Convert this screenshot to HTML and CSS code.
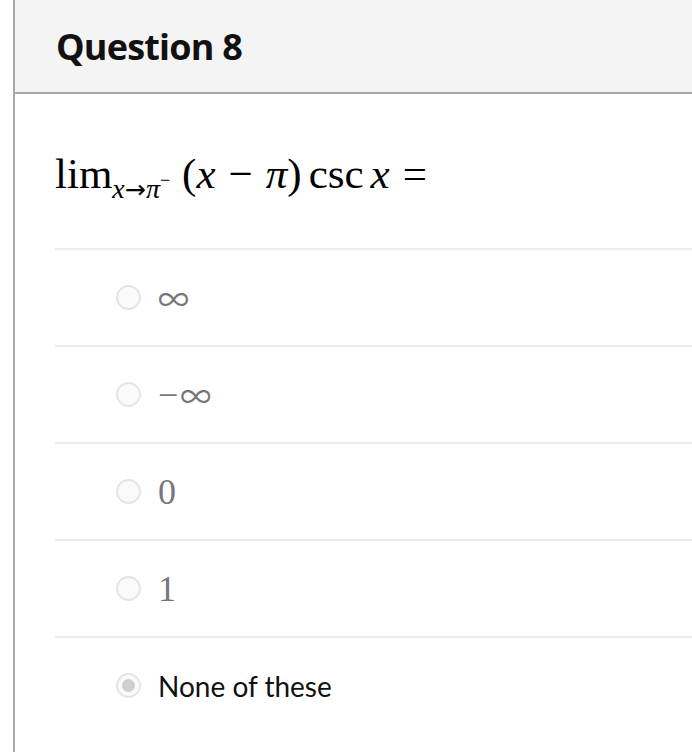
FILE: index.html
```html
<!DOCTYPE html>
<html>
<head>
<meta charset="utf-8">
<link rel="stylesheet" href="styles.css">
</head>
<body>
<div class="question">
  <div class="header"><h2 class="title">Question 8</h2></div>
  <div class="content">
    <div class="prompt">
      <span class="math">lim<sub class="sub"><span class="var">x</span><span class="arrow">→</span><span class="var">π</span><sup class="sup">−</sup></sub><span class="sp"></span>(<span class="var">x</span><span class="op">−</span><span class="var">π</span>)<span class="thin"></span>csc<span class="thin"></span><span class="var">x</span><span class="op">=</span></span>
    </div>
    <div class="answers">
      <div class="answer"><span class="radio"></span><span class="label math-ans"><span class="inf">∞</span></span></div>
      <div class="answer"><span class="radio"></span><span class="label math-ans"><span class="minus">−</span><span class="inf">∞</span></span></div>
      <div class="answer"><span class="radio"></span><span class="label math-ans">0</span></div>
      <div class="answer"><span class="radio"></span><span class="label math-ans">1</span></div>
      <div class="answer"><span class="radio checked"></span><span class="label text-ans">None of these</span></div>
    </div>
  </div>
</div>
</body>
</html>
```

FILE: styles.css
```css
html, body {
  margin: 0;
  padding: 0;
  background: #fff;
  height: 100%;
}
.question {
  margin-left: 13px;
  border-left: 2px solid #a9a9a9;
  min-height: 100%;
}
.header {
  background: #f4f4f4;
  height: 92px;
  border-bottom: 2px solid #a9a9a9;
  display: flex;
  align-items: center;
  padding-left: 41px;
}
.title {
  margin: 0;
  font-family: "Open Sans", sans-serif;
  font-weight: 700;
  font-size: 36px;
  color: #111;
  letter-spacing: -0.8px;
}
.content {
  padding-left: 40px;
}
.prompt {
  height: 154px;
  display: flex;
  align-items: center;
  padding-top: 12px;
  box-sizing: border-box;
}
.math {
  font-family: "Liberation Serif", "DejaVu Serif", serif;
  font-size: 43px;
  color: #000;
  white-space: nowrap;
  line-height: 1;
}
.var {
  font-family: "Liberation Serif", serif;
  font-style: italic;
}
.sub {
  font-size: 28px;
  vertical-align: -10px;
}
.arrow {
  font-family: "DejaVu Sans", sans-serif;
  font-size: 0.9em;
}
.sup {
  font-size: 18px;
  vertical-align: 12px;
}
.sp {
  display: inline-block;
  width: 12px;
}
.thin {
  display: inline-block;
  width: 7px;
}
.op {
  margin: 0 13px;
}
.answer {
  border-top: 2px solid #ececec;
  height: 95px;
  display: flex;
  align-items: center;
  padding-left: 61px;
}
.radio {
  width: 21px;
  height: 21px;
  border: 2px solid #e5e5e5;
  border-radius: 50%;
  background: #fafafa;
  display: flex;
  align-items: center;
  justify-content: center;
  flex: none;
}
.radio.checked::after {
  content: "";
  width: 13px;
  height: 13px;
  border-radius: 50%;
  background: #cfcfcf;
}
.label {
  margin-left: 17px;
}
.math-ans {
  font-family: "Liberation Serif", "DejaVu Serif", serif;
  font-size: 36px;
  color: #777;
  line-height: 1;
  display: flex;
  align-items: center;
}
.minus {
  margin-right: 2px;
}
.inf {
  font-family: "Noto Sans CJK JP", "DejaVu Sans", sans-serif;
  font-size: 31px;
  line-height: 1;
}
.text-ans {
  font-family: Lato, sans-serif;
  font-size: 28px;
  color: #111;
}
```
